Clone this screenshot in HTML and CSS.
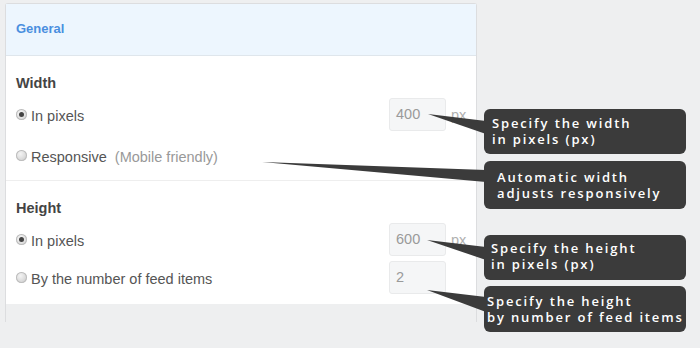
FILE: index.html
```html
<!DOCTYPE html>
<html lang="en">
<head>
<meta charset="UTF-8">
<title>Feed size settings</title>
<link rel="stylesheet" href="styles.css">
</head>
<body>
<div class="page">
  <div class="frame">
    <div class="card">
      <div class="card-head">General</div>

      <div class="section">
        <div class="section-title">Width</div>
        <div class="opts opts-wide">
          <div class="row">
            <span class="radio checked"></span>
            <span class="label">In pixels</span>
            <span class="field">400</span>
            <span class="unit">px</span>
          </div>
          <div class="row">
            <span class="radio"></span>
            <span class="label">Responsive <span class="hint">(Mobile friendly)</span></span>
          </div>
        </div>
      </div>

      <div class="section">
        <div class="section-title">Height</div>
        <div class="opts">
          <div class="row">
            <span class="radio checked"></span>
            <span class="label">In pixels</span>
            <span class="field">600</span>
            <span class="unit">px</span>
          </div>
          <div class="row">
            <span class="radio"></span>
            <span class="label">By the number of feed items</span>
            <span class="field">2</span>
            <span class="unit unit-empty">px</span>
          </div>
        </div>
      </div>
    </div>
  </div>

  <div class="notes">
    <div class="note note-1">Specify the width<br>in pixels (px)</div>
    <div class="note note-2">Automatic width<br>adjusts responsively</div>
    <div class="note note-3">Specify the height<br>in pixels (px)</div>
    <div class="note note-4">Specify the height<br>by number of feed items</div>
  </div>

  <svg class="tails" width="700" height="348" viewBox="0 0 700 348">
    <polygon points="428,114 486,121 486,134"/>
    <polygon points="262,162 486,170 486,182"/>
    <polygon points="427,240 486,247 486,260"/>
    <polygon points="427,290 486,297 486,312"/>
  </svg>
</div>
</body>
</html>
```

FILE: styles.css
```css
body {
  margin: 0;
  background: #eeeff0;
  font-family: 'Liberation Sans', Arial, sans-serif;
}
.page {
  position: relative;
  display: flex;
  align-items: flex-start;
  width: 700px;
  height: 348px;
  padding: 3px 0 0 5px;
  box-sizing: border-box;
}

/* settings panel */
.frame {
  width: 472px;
  height: 319px;
  box-sizing: border-box;
  border: 1px solid #dcdddf;
  border-bottom: none;
  border-radius: 3px 3px 0 0;
}
.card {
  background: #fff;
}
.card-head {
  height: 52px;
  line-height: 50px;
  padding-left: 10px;
  background: #edf6fe;
  border-bottom: 1px solid #dfe6ec;
  box-sizing: border-box;
  color: #4a8fdf;
  font-size: 13px;
  font-weight: bold;
}
.section {
  padding: 19px 10px 8px 10px;
}
.section + .section {
  border-top: 1px solid #eeeeee;
  padding-bottom: 10px;
}
.section-title {
  height: 17px;
  line-height: 17px;
  margin-bottom: 6px;
  color: #444;
  font-size: 14.5px;
  font-weight: bold;
}
.opts {
  display: flex;
  flex-direction: column;
  gap: 5px;
}
.opts-wide {
  gap: 8px;
}
.row {
  display: flex;
  align-items: center;
  height: 33px;
}
.radio {
  width: 11px;
  height: 11px;
  border-radius: 50%;
  background: radial-gradient(circle at 40% 35%, #f4f4f4, #c6c6c6);
  box-shadow: inset 0 0 0 1px #bdbdbd;
  margin-right: 4px;
  flex: none;
  position: relative;
}
.radio.checked {
  background: radial-gradient(circle at 40% 35%, #f6f6f6, #cfcfcf);
}
.radio.checked::after {
  content: "";
  position: absolute;
  left: 3px;
  top: 3px;
  width: 5px;
  height: 5px;
  border-radius: 50%;
  background: #444;
}
.label {
  color: #555;
  font-size: 14.5px;
  padding-top: 2px;
  flex: 1;
}
.hint {
  color: #999;
  margin-left: 4px;
}
.field {
  width: 57px;
  height: 33px;
  box-sizing: border-box;
  padding-left: 6px;
  line-height: 31px;
  background: #f5f6f7;
  border: 1px solid #e9eaeb;
  border-radius: 3px;
  color: #9a9a9a;
  font-size: 14.5px;
}
.unit {
  width: 15px;
  margin-left: 5px;
  color: #b0b0b0;
  font-size: 14.5px;
}
.unit-empty {
  visibility: hidden;
}

/* annotation callouts */
.notes {
  display: flex;
  flex-direction: column;
  margin: 106px 0 0 7px;
  width: 202px;
}
.note {
  background: #3b3b3b;
  border-radius: 6px;
  color: #fff;
  font-family: 'Open Sans', sans-serif;
  font-weight: 600;
  font-size: 13px;
  line-height: 16px;
  letter-spacing: 1.85px;
  box-sizing: border-box;
}
.note-1 {
  height: 45px;
  padding: 6px 0 0 8px;
}
.note-2 {
  height: 48px;
  margin-top: 7px;
  padding: 8px 0 0 13px;
}
.note-3 {
  height: 45px;
  margin-top: 26px;
  padding: 5px 0 0 7px;
}
.note-4 {
  height: 46px;
  margin-top: 6px;
  padding: 7px 0 0 3px;
}
.tails {
  position: absolute;
  left: 0;
  top: 0;
  pointer-events: none;
}
.tails polygon {
  fill: #3b3b3b;
}
```
